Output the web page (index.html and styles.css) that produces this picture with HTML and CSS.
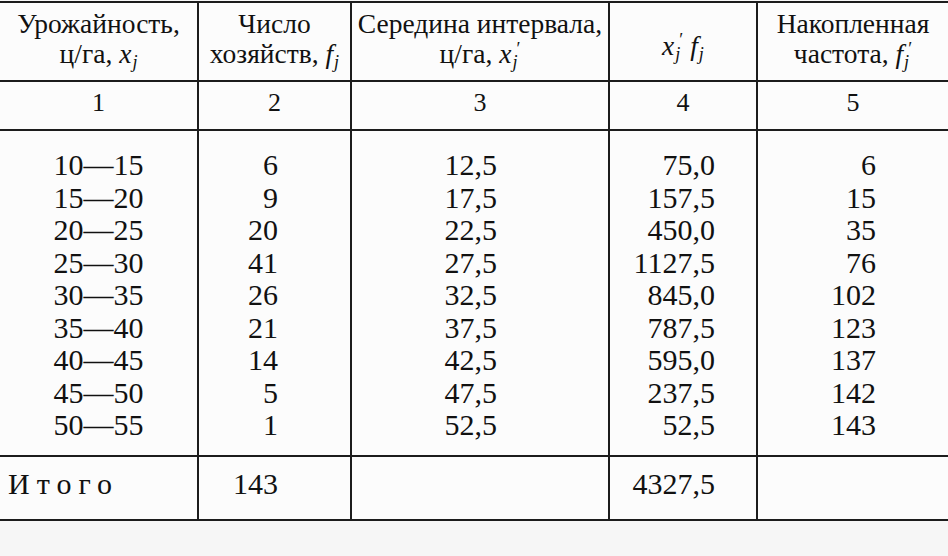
FILE: index.html
```html
<!DOCTYPE html>
<html lang="ru">
<head>
<meta charset="utf-8">
<title>Таблица</title>
<link rel="stylesheet" href="styles.css">
</head>
<body>
<table class="t">
  <colgroup>
    <col class="c1"><col class="c2"><col class="c3"><col class="c4"><col class="c5">
  </colgroup>
  <tr class="head">
    <th>Урожайность,<br>ц/га, <i>x</i><sub><i>j</i></sub></th>
    <th>Число<br>хозяйств, <i>f</i><sub><i>j</i></sub></th>
    <th>Середина интервала,<br>ц/га, <i>x</i><sub><i>j</i></sub><sup>′</sup></th>
    <th class="mid"><i>x</i><sub><i>j</i></sub><sup>′</sup> <i>f</i><sub><i>j</i></sub></th>
    <th>Накопленная<br>частота, <i>f</i><sub><i>j</i></sub><sup>′</sup></th>
  </tr>
  <tr class="nums">
    <td>1</td><td>2</td><td>3</td><td>4</td><td>5</td>
  </tr>
  <tr class="data">
    <td class="d1">
      <div>10—15</div><div>15—20</div><div>20—25</div><div>25—30</div><div>30—35</div><div>35—40</div><div>40—45</div><div>45—50</div><div>50—55</div>
    </td>
    <td class="d2">
      <div>6</div><div>9</div><div>20</div><div>41</div><div>26</div><div>21</div><div>14</div><div>5</div><div>1</div>
    </td>
    <td class="d3">
      <div>12,5</div><div>17,5</div><div>22,5</div><div>27,5</div><div>32,5</div><div>37,5</div><div>42,5</div><div>47,5</div><div>52,5</div>
    </td>
    <td class="d4">
      <div>75,0</div><div>157,5</div><div>450,0</div><div>1127,5</div><div>845,0</div><div>787,5</div><div>595,0</div><div>237,5</div><div>52,5</div>
    </td>
    <td class="d5">
      <div>6</div><div>15</div><div>35</div><div>76</div><div>102</div><div>123</div><div>137</div><div>142</div><div>143</div>
    </td>
  </tr>
  <tr class="total">
    <td class="label">Итого</td>
    <td class="d2">143</td>
    <td></td>
    <td class="d4">4327,5</td>
    <td></td>
  </tr>
</table>
</body>
</html>
```

FILE: styles.css
```css
html, body {
  margin: 0;
  padding: 0;
  background: #f6f6f6;
}

body {
  padding-top: 1px;
  font-family: "Liberation Serif", "Times New Roman", serif;
  color: #111;
}

.t {
  width: 948px;
  border-collapse: collapse;
  table-layout: fixed;
  background: #fcfcfc;
}

.c1 { width: 198px; }
.c2 { width: 153px; }
.c3 { width: 258px; }
.c4 { width: 148px; }
.c5 { width: 191px; }

.t th, .t td {
  border: 2px solid #1c1c1c;
  padding: 0;
}

.t tr > :first-child { border-left: none; }
.t tr > :last-child { border-right: none; }

.head th {
  font-weight: normal;
  font-size: 27.5px;
  line-height: 30px;
  text-align: center;
  vertical-align: top;
  padding: 6px 0 11px;
}

.head th.mid {
  vertical-align: middle;
  padding-top: 8px;
  padding-bottom: 0;
}

.head sub, .head sup {
  font-size: 0.66em;
  line-height: 0;
  position: relative;
  vertical-align: baseline;
}

.head sub {
  top: 0.3em;
  margin-left: 1px;
}

.head sup {
  top: -0.45em;
  margin-left: -1px;
}

.nums td {
  font-size: 26px;
  line-height: 26px;
  text-align: center;
  padding: 8px 0 13px;
}

.data td {
  font-size: 30px;
  line-height: 32.5px;
  vertical-align: top;
  padding-top: 18px;
  padding-bottom: 13px;
}

.d1 { text-align: center; }
.t .d2 { text-align: right; padding-right: 72px; }
.t .d3 { text-align: right; padding-right: 111px; }
.t .d4 { text-align: right; padding-right: 41px; }
.t .d5 { text-align: right; padding-right: 72px; }

.total td {
  font-size: 30px;
  line-height: 32px;
  height: 64px;
  box-sizing: border-box;
  vertical-align: middle;
  padding-top: 0;
  padding-bottom: 8px;
}

.total .label {
  text-align: left;
  padding-left: 8px;
  letter-spacing: 7px;
}
```
